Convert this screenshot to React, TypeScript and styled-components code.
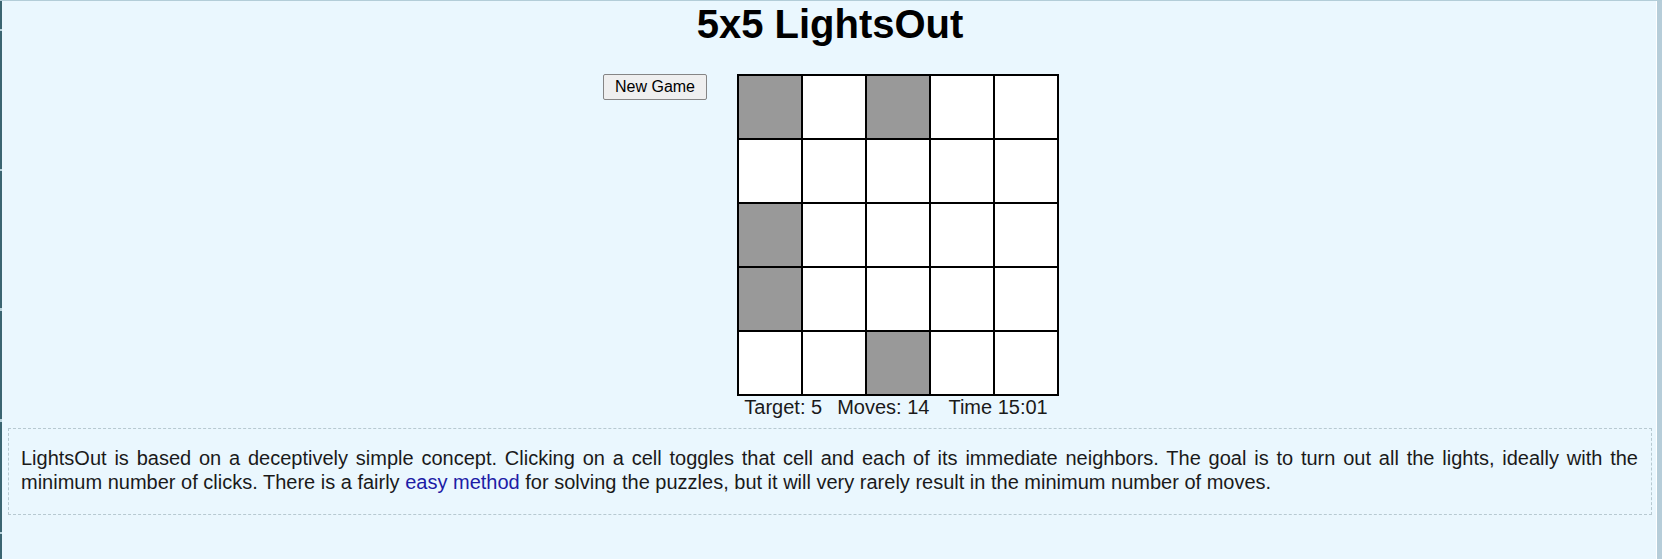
import React from "react";
import styled, { createGlobalStyle } from "styled-components";

const Global = createGlobalStyle`
  html, body { margin: 0; padding: 0; }
  body {
    background: #eaf7fe;
    font-family: "Liberation Sans", Arial, sans-serif;
    color: #1a1a1a;
    overflow: hidden;
  }
`;

const Frame = styled.div`
  display: flex;
  height: 100vh;
  box-sizing: border-box;
  border-top: 1px solid #b3cdd8;
`;

const LeftRail = styled.div`
  width: 2px;
  flex: none;
  background: linear-gradient(
    to bottom,
    #3b6571 0, #3b6571 28px, #b9d3dc 28px, #b9d3dc 30px,
    #3b6571 30px, #3b6571 168px, #b9d3dc 168px, #b9d3dc 170px,
    #3b6571 170px, #3b6571 307px, #b9d3dc 307px, #b9d3dc 310px,
    #3b6571 310px, #3b6571 418px, #b9d3dc 418px, #b9d3dc 421px,
    #3b6571 421px, #3b6571 531px, #b9d3dc 531px, #b9d3dc 533px,
    #3b6571 533px
  );
`;

const RightRail = styled.div`
  width: 5px;
  flex: none;
  background: #b6cdd9;
`;

const Page = styled.main`
  flex: 1;
  min-width: 0;
  padding: 0 4px 0 6px;
  border-right: 1px solid #ffffff;
  display: flex;
  flex-direction: column;
`;

const Title = styled.h1`
  margin: 0;
  text-align: center;
  font-size: 40px;
  line-height: 46px;
  font-weight: bold;
  color: #000;
`;

const GameRow = styled.div`
  margin-top: 27px;
  display: flex;
  justify-content: center;
  align-items: flex-start;
  gap: 30px;
  padding-left: 2px;
`;

const NewGameButton = styled.button`
  font-family: "Liberation Sans", Arial, sans-serif;
  font-size: 16px;
  line-height: 18px;
  padding: 3px 11px;
  color: #000;
  background: #efefef;
  border: 1px solid #858585;
  border-radius: 2px;
  cursor: pointer;
`;

const BoardColumn = styled.div`
  display: flex;
  flex-direction: column;
  align-items: center;
`;

const Board = styled.div`
  display: grid;
  grid-template-columns: repeat(5, 64px);
  grid-auto-rows: 64px;
  border: 1px solid #000;
  background: #fff;
`;

const Cell = styled.div<{ $on: boolean }>`
  box-sizing: border-box;
  border: 1px solid #000;
  background: ${(p) => (p.$on ? "#999999" : "#ffffff")};
`;

const Stats = styled.div`
  display: flex;
  font-size: 20px;
  line-height: 23px;
  color: #1a1a1a;
  padding-right: 4px;
`;

const Stat = styled.span<{ $gap: number }>`
  margin-left: ${(p) => p.$gap}px;
  white-space: nowrap;
`;

const About = styled.section`
  margin-top: 9px;
  border: 1px dashed #b7c9d1;
  padding: 17px 13px 20px 12px;
  font-size: 20px;
  line-height: 24px;
  text-align: justify;
  color: #1a1a1a;
`;

const Link = styled.a`
  color: #1d1ca6;
  text-decoration: none;
`;

const lit = [
  [1, 0, 1, 0, 0],
  [0, 0, 0, 0, 0],
  [1, 0, 0, 0, 0],
  [1, 0, 0, 0, 0],
  [0, 0, 1, 0, 0],
];

export default function App() {
  return (
    <>
      <Global />
      <Frame>
        <LeftRail />
        <Page>
          <Title>5x5 LightsOut</Title>
          <GameRow>
            <NewGameButton type="button">New Game</NewGameButton>
            <BoardColumn>
              <Board>
                {lit.flatMap((row, r) =>
                  row.map((v, c) => <Cell key={`${r}-${c}`} $on={v === 1} />)
                )}
              </Board>
              <Stats>
                <Stat $gap={0}>Target: 5</Stat>
                <Stat $gap={15}>Moves: 14</Stat>
                <Stat $gap={19}>Time 15:01</Stat>
              </Stats>
            </BoardColumn>
          </GameRow>
          <About>
            LightsOut is based on a deceptively simple concept. Clicking on a cell toggles that cell and each of its
            immediate neighbors. The goal is to turn out all the lights, ideally with the minimum number of clicks.
            There is a fairly <Link href="#">easy method</Link> for solving the puzzles, but it will very rarely
            result in the minimum number of moves.
          </About>
        </Page>
        <RightRail />
      </Frame>
    </>
  );
}
